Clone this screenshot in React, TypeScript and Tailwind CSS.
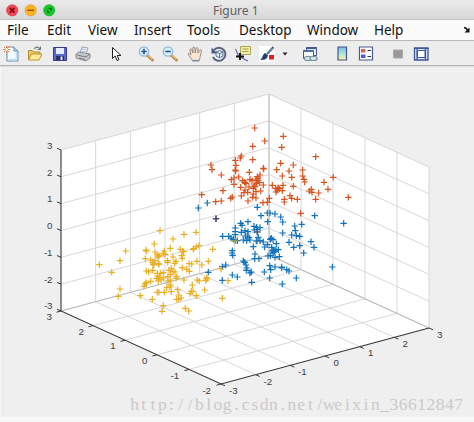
import type { ReactNode } from 'react'

type Point = [number, number]

const BLUE: Point[] = [
  [198.3, 208], [207.3, 203], [216, 218.7], [257.3, 207.3], [261, 215.7], [267.3, 213], [270, 213], [275, 214], [280.7, 217],
  [282.7, 222], [267.7, 221.7], [314.7, 215.7], [343.7, 223.3], [301.7, 224.3], [294.7, 226], [295.3, 230.7], [282.7, 233],
  [291.7, 235], [296.3, 235.7], [299.7, 236.3], [289, 242.3], [293.7, 247.3], [299.7, 245.7], [311, 241.7], [314, 247.3],
  [303.7, 253], [332.3, 267], [296.3, 278], [282.3, 284], [281.7, 267], [281.7, 268], [286.7, 269.7], [289, 271], [275, 267],
  [269.7, 265.7], [270.7, 269.7], [269.7, 278], [264.3, 272], [251.3, 272], [251.7, 282.3], [279.3, 256.7], [271.3, 238.3],
  [270.3, 239.3], [273, 239.7], [276.3, 243.7], [278.3, 249.7], [273.3, 250], [272, 251], [274.7, 251.3], [276, 250],
  [273.3, 252.7], [275, 257.3], [270.3, 255.7], [268, 256], [271.7, 247.3], [267.3, 244.7], [263.3, 242], [260, 240.7],
  [253.3, 246.7], [255, 254], [254.7, 258.7], [259, 258.7], [254, 226.3], [256.7, 227.3], [260, 227.7], [257.3, 229.3],
  [254.3, 230], [257.3, 232], [258.3, 237.3], [256.3, 241], [250, 240], [222.7, 236.3], [228.7, 236.3], [231, 238],
  [240.7, 223.3], [242, 225.3], [248, 221.7], [235.3, 231.7], [235.3, 234.7], [233.3, 239.3], [237.3, 240.7], [241.3, 232.3],
  [245, 230.7], [248, 231.7], [247.3, 236], [245.3, 236], [243.3, 240], [246.7, 240.7], [249, 237.7], [232.3, 250.7],
  [232, 253], [232.7, 255.3], [225.7, 265], [222.3, 266.7], [208.3, 272.3], [222.3, 280.3], [232.3, 275], [237.3, 277],
  [243.3, 261], [244.7, 262.3], [246, 265], [247, 268], [246.3, 270.3], [250, 273], [264.7, 247], [235.3, 228],
]

const ORANGE: Point[] = [
  [254.7, 128], [264.7, 141], [252.7, 146.3], [283.3, 136.3], [281.7, 147.3], [315.7, 156.7], [241.3, 156], [240.3, 158],
  [252.7, 159.7], [235.3, 160.3], [236, 165.3], [235.3, 170], [235.7, 171], [211, 165], [212, 169.7], [221.3, 175],
  [223, 190.7], [201.7, 194.7], [215.7, 201.7], [221.3, 201], [230.7, 198.3], [232.3, 197], [249.3, 172.3], [263.3, 168.3],
  [263.7, 169], [231.3, 179.7], [234, 178], [238.7, 177], [234, 184.3], [240.7, 187.3], [242.7, 180.7], [244.7, 182.3],
  [246, 183.3], [250, 179.3], [252, 180.7], [254, 185], [256, 180], [257.3, 176.7], [258, 180.7], [259.3, 182.7],
  [253.3, 188.3], [255, 186.7], [260, 175], [263.3, 185], [260.7, 191], [256, 191.7], [247.7, 192.3], [244, 192.7],
  [241.3, 196], [248, 201], [253.3, 194], [252.7, 197.3], [256, 198], [269.3, 198.3], [263, 202.7], [267.3, 202.3],
  [245, 190], [249, 187], [256.7, 183.3], [258, 178.7], [280.7, 163.3], [276.7, 169.7], [293.3, 165], [289, 171],
  [302.7, 170], [282.3, 176], [291.7, 177.3], [302.7, 176], [304, 179.3], [304.7, 182], [333.3, 177.3], [324, 182.3],
  [328, 189.3], [318.7, 193], [315.7, 199.3], [311.3, 189.3], [309.3, 191], [312, 192.3], [348.3, 197.3], [300.7, 213.3],
  [297.3, 199.3], [290, 195.7], [291.7, 198.3], [284.3, 199.3], [284.3, 202], [293.3, 186.3], [283, 185.3], [272.3, 185.3],
  [275.7, 188.3], [277.3, 190], [279.3, 188.7], [282.3, 190.7], [276, 192], [278, 187.7],
]

const YELLOW: Point[] = [
  [99.3, 264.7], [111.7, 272.3], [120, 260.7], [125.7, 251], [120, 289], [118.3, 296.3], [140.3, 295.7], [144, 286.3],
  [145, 284], [146.3, 282.7], [150.7, 281.3], [160, 230.7], [154.3, 244], [173, 239], [184, 234.3], [196, 232.3],
  [146, 250], [146.3, 251], [145.3, 258.7], [146.3, 271], [148.7, 272], [150.7, 260], [152.7, 262.3], [153.7, 265],
  [155, 252], [157, 254.7], [159, 255.7], [158, 256.7], [164.3, 251], [163.3, 253.3], [165, 254.3], [170.3, 248.3],
  [180.3, 249.3], [182.7, 251.3], [183.7, 251.7], [181.7, 255.7], [182.3, 258.3], [199, 245.5], [196.3, 246.7],
  [193.7, 248.7], [193.3, 249.3], [212.7, 249.3], [155, 260.7], [158.3, 263.7], [153, 264], [159, 264.3], [167.3, 260.7],
  [167.7, 262.3], [176, 261.3], [174.7, 263.3], [189.3, 263.7], [191.7, 264], [197, 261.3], [201.7, 265], [208.3, 261.3],
  [152.7, 270.3], [171.3, 268.3], [169, 270.3], [173, 271.7], [175, 272], [170.7, 274.7], [186.7, 269.3], [189.3, 271.3],
  [182.3, 267.7], [157.3, 273.3], [160.3, 273.3], [163.3, 272.7], [157.3, 276], [159.3, 277.3], [156.7, 278.3], [161, 279.7],
  [158.3, 281], [163.3, 278], [167.7, 276.7], [170, 280], [168, 281], [176.7, 276.7], [176, 278.3], [184, 280],
  [197.3, 280], [199.3, 281], [206.7, 277.7], [205.7, 280.3], [207, 279], [204.7, 290], [192.3, 285], [191.3, 291.3],
  [190, 293.5], [193, 291.5], [196.3, 295.7], [170.7, 285], [169.7, 287], [166.7, 287.7], [164.3, 292.3], [157.3, 292.3],
  [159, 292.3], [171.3, 291.7], [177.7, 289.7], [178.7, 295], [176.7, 299.3], [178.7, 299.3], [181, 298], [152.3, 299.3],
  [163.3, 305.7], [162, 311.3], [185.3, 308.3], [188.7, 311], [222.3, 298.3], [221, 269], [228, 280.7], [173, 257],
]

// Markers where two series sit on top of each other
const OVERLAP: { at: Point; color: string }[] = [
  { at: [216, 218.7], color: '#5f3b62' },
  { at: [257.3, 232], color: '#5f5560' },
  { at: [235.3, 240.7], color: '#8d9540' },
  { at: [257, 241], color: '#2f72a8' },
]

const TITLES = [
  { label: 'File', className: 'ml-[7px] w-[40px]' },
  { label: 'Edit', className: 'w-[41px]' },
  { label: 'View', className: 'w-[46px]' },
  { label: 'Insert', className: 'w-[53px]' },
  { label: 'Tools', className: 'w-[52px]' },
  { label: 'Desktop', className: 'w-[68px]' },
  { label: 'Window', className: 'w-[67px]' },
  { label: 'Help', className: 'w-[40px]' },
]

// Axes box corners
const LEFT = { x: 61, top: 150, bottom: 311 }
const BACK = { x: 269, top: 94, bottom: 255 }
const RIGHT = { x: 429, top: 167, bottom: 328 }

const plusPath = (points: Point[]) => points.map(([x, y]) => `M${x - 3.2} ${y}h6.4M${x} ${y - 3.2}v6.4`).join('')

function gridPath() {
  const parts: string[] = []
  const dx = (BACK.x - LEFT.x) / 6
  const dy = (BACK.top - LEFT.top) / 6
  const rx = (RIGHT.x - BACK.x) / 5
  const ry = (RIGHT.top - BACK.top) / 5
  for (let i = 0; i <= 6; i++) {
    const x = LEFT.x + dx * i
    const y = LEFT.bottom + dy * i
    const z = (161 / 6) * i
    if (i > 0) parts.push(`M${x} ${LEFT.top + dy * i}V${y}l160 73`)
    parts.push(`M${LEFT.x} ${LEFT.top + z}L${BACK.x} ${BACK.top + z}L${RIGHT.x} ${RIGHT.top + z}`)
  }
  for (let i = 1; i <= 5; i++) {
    const x = BACK.x + rx * i
    parts.push(`M${x} ${BACK.top + ry * i}V${BACK.bottom + ry * i}`)
    if (i < 5) parts.push(`M${x} ${BACK.bottom + ry * i}l-208 56`)
  }
  return parts.join('')
}

function tickPath() {
  const parts: string[] = []
  for (let i = 0; i <= 6; i++) {
    parts.push(`M61 ${150 + (161 / 6) * i}l-4 -1.8`)
    parts.push(`M${221 + (208 / 6) * i} ${384 - (56 / 6) * i}l4 1.8`)
  }
  for (let i = 0; i <= 5; i++) {
    parts.push(`M${61 + 32 * i} ${311 + 14.6 * i}l-4.5 1.2`)
  }
  return parts.join('')
}

const WATERMARK = 'http://blog.csdn.net/weixin_36612847'
const WATERMARK_X = WATERMARK.split('').map((_, i) => (134.5 + i * 9.26).toFixed(1)).join(' ')

function Plot() {
  return (
    <svg width="474" height="355" viewBox="0 67 474 355" className="block shrink-0">
      <path d="M61 150L269 94L429 167V328L221 384L61 311Z" fill="#fff" />
      <path d={gridPath()} fill="none" stroke="#d3d3d3" strokeWidth="0.9" />
      <path d="M61 311L269 255L429 328M269 94V255" fill="none" stroke="#b8b8b8" strokeWidth="0.9" />
      <g fill="none" strokeWidth="1.2">
        <path d={plusPath(BLUE)} stroke="#0f72bd" />
        <path d={plusPath(ORANGE)} stroke="#d9531f" />
        <path d={plusPath(YELLOW)} stroke="#e9af20" />
        {OVERLAP.map(({ at, color }) => (
          <path key={at.join()} d={plusPath([at])} stroke={color} />
        ))}
      </g>
      <path d="M61 150V311L221 384L429 328" fill="none" stroke="#333" strokeWidth="1.1" />
      <path d={tickPath()} stroke="#333" strokeWidth="1" />
      <g fontFamily='"Liberation Sans", sans-serif' fontSize="9.7" fill="#3c3c3c">
        <g textAnchor="end">
          {[3, 2, 1, 0, -1, -2, -3].map((n, i) => (
            <text key={n} x="52.5" y={149 + 26.7 * i}>{n}</text>
          ))}
          {[3, 2, 1, 0, -1, -2].map((n, i) => (
            <text key={n} x={52 + 31.8 * i} y={319.7 + 14.8 * i}>{n}</text>
          ))}
        </g>
        {[-3, -2, -1, 0, 1, 2, 3].map((n, i) => (
          <text key={n} x={(n < 0 ? 229 : 230) + 34.5 * i} y={394 - 9.4 * i}>{n}</text>
        ))}
      </g>
      <text x={WATERMARK_X} y="410" textAnchor="middle" fontFamily='"Liberation Serif", serif' fontSize="17.5" fill="#cacaca">
        {WATERMARK}
      </text>
      <path d="M0 67H1V417H474V422H0Z" fill="#f7f7f7" />
    </svg>
  )
}

function Icon({ className, children }: { className: string; children: ReactNode }) {
  return (
    <svg width="18" height="18" viewBox="0 0 18 18" fill="none" className={`shrink-0 ${className}`}>
      {children}
    </svg>
  )
}

function Magnifier({ plus }: { plus?: boolean }) {
  return (
    <>
      <path d="M10.5 10.5l5 4.5" stroke="#b98545" strokeWidth="3" strokeLinecap="round" />
      <path d="M11 10.3l4.5 4" stroke="#f0c987" strokeWidth="1.2" />
      <circle cx="7" cy="6.5" r="4.7" fill="#d6f1fb" stroke="#8eb7d6" strokeWidth="1.2" />
      <path d={plus ? 'M4.3 6.5h5.4M7 3.8v5.4' : 'M4.3 6.5h5.4'} stroke="#29518e" strokeWidth="1.6" />
    </>
  )
}

function Toolbar() {
  return (
    <div className="flex h-[24px] shrink-0 items-center bg-[#ededed] pt-px">
      <Icon className="ml-[2px]">
        <path d="M5 2h7l4 4v10H5z" fill="#f5fbff" stroke="#6688ae" />
        <path d="M12 2v4h4" fill="#b8d4ee" stroke="#6688ae" />
        <path d="M14.5 7v7.5H7" stroke="#c3e0f2" strokeWidth="1.5" />
        <path d="M2 2l5 5M7 2L2 7M4.5 1v7M1 4.5h7" stroke="#d98255" strokeWidth="1" />
        <circle cx="4.5" cy="4.5" r="1.4" fill="#fff2cb" />
      </Icon>
      <Icon className="ml-[6px]">
        <path d="M2.5 15V5.5h4L8 7h6v3" fill="#e9c85f" stroke="#ad8b32" />
        <path d="M2.5 15l3-6H16l-3 6z" fill="#ffe99a" stroke="#bd962f" />
        <path d="M8 4c2-3 5-2 6 0M14.5 1.5v3h-3" stroke="#697b83" strokeWidth="1.1" />
      </Icon>
      <Icon className="ml-[7px]">
        <path d="M2.5 2.5h13v13h-13z" fill="#5867c9" stroke="#353b91" />
        <path d="M5 3h8v6H5z" fill="#e6edff" />
        <path d="M5 11h8v4H5z" fill="#28306f" />
        <path d="M9.5 11.5h2V15h-2z" fill="#e4e6f6" />
      </Icon>
      <Icon className="ml-[5px]">
        <path d="M6 8l2-6 6 1-2 6z" fill="#eff5ff" stroke="#96a5be" />
        <path d="M2 9l3-2 11 2v4l-4 3-10-3z" fill="#c6c8cd" stroke="#898c93" />
        <path d="M3 10l9 2 4-3M5 13l6 1.5" stroke="#777b84" />
        <path d="M8 4l4 .7M7.5 6l4 .7" stroke="#9cabce" strokeWidth=".7" />
      </Icon>
      <Icon className="ml-[15px]">
        <path d="M5.5 2.5v11l2.7-2.5L10 15.5l2-.8-1.8-4.2H14z" fill="#fff" stroke="#222" strokeWidth="1" />
      </Icon>
      <Icon className="ml-[12px]"><Magnifier plus /></Icon>
      <Icon className="ml-[6px]"><Magnifier /></Icon>
      <Icon className="ml-[7px]">
        <path d="M6 15c-1-2-3-4-4-6 .5-1.300 2-.5 3 1L3.800 5c0-1.500 1.600-1.500 2 0L7 8l-.2-5c.2-1.500 1.800-1.500 2 0L9.200 8l1-4.600c.4-1.400 2-1 1.800.4L11.800 8l2-2.800c.8-1.200 2-.5 1.600.8C14.500 10 14 13 13 16H7z" fill="#fde5d2" stroke="#8f8279" strokeWidth=".9" />
        <path d="M6 15.5h7" stroke="#8190b6" strokeWidth="1.4" />
      </Icon>
      <Icon className="ml-[6px]">
        <path d="M4 5a6.500 6.500 0 1 1-1 7" stroke="#536580" strokeWidth="2" />
        <path d="M1.500 2.500v6h6z" fill="#455d83" />
        <path d="M6 7l3.500-1.500L13 7v4l-3.500 1.700L6 11zM6 7l3.500 1.500L13 7M9.500 8.500v4" fill="#dbeaf7" stroke="#50688b" strokeWidth=".9" />
      </Icon>
      <Icon className="ml-[6px]">
        <path d="M1 4c2 0 2 7 5 8s5 3 8 4" stroke="#555fc0" strokeWidth="1.1" />
        <path d="M6.500 1.500h10v8h-10z" fill="#f1efa3" stroke="#aaa854" />
        <path d="M8.500 4h6M8.500 6.500h6" stroke="#99964e" strokeWidth=".9" />
        <path d="M2 11.500h8M6 8v7" stroke="#151515" strokeWidth="1.9" />
      </Icon>
      <Icon className="ml-[6px]">
        <rect x="1" y="1" width="16" height="16" rx="1" fill="#fff" />
        <path d="M9 9l6.500-7" stroke="#485e83" strokeWidth="2.3" />
        <path d="M9.500 8l5-5" stroke="#9cb9d6" strokeWidth=".8" />
        <path d="M7 8l3 2.500c-1 4-4 4.500-8 4.500 3-2 2-5 5-7z" fill="#263d65" />
        <path d="M11 10h5v4.500h-5z" fill="#ed1820" />
      </Icon>
      <svg width="8" height="18" viewBox="0 0 8 18" className="ml-[5px] shrink-0">
        <path d="M1.500 7.500h5L4 10.500z" fill="#222" />
      </svg>
      <Icon className="ml-[12px]">
        <path d="M5.500 2.500h10v8h-10z" fill="#e8f0fb" stroke="#425b91" />
        <path d="M5 3.200h11" stroke="#425b91" strokeWidth="1.7" />
        <path d="M2.500 5.500h10v8h-10z" fill="#f5f8fd" stroke="#425b91" />
        <path d="M2 6.200h11" stroke="#506da5" strokeWidth="1.5" />
        <rect x="3.5" y="11.5" width="7" height="4" rx="2" fill="#d7e3e9" stroke="#748e9c" strokeWidth="1.2" />
        <rect x="9" y="11.5" width="7" height="4" rx="2" fill="#d7e3e9" stroke="#748e9c" strokeWidth="1.2" />
      </Icon>
      <Icon className="ml-[14px]">
        <defs>
          <linearGradient id="colorbar" x1="0" y1="0" x2="0" y2="1">
            <stop stopColor="#79b6e5" />
            <stop offset=".5" stopColor="#a9e5e0" />
            <stop offset="1" stopColor="#fff09b" />
          </linearGradient>
        </defs>
        <path d="M5 2h8.500v13H5z" fill="url(#colorbar)" stroke="#45558b" strokeWidth="1.2" />
      </Icon>
      <Icon className="ml-[6px]">
        <path d="M2.500 2h13v13h-13z" fill="#fff" stroke="#4b5a93" strokeWidth="1.2" />
        <path d="M4 4h4.500v3.500H4z" fill="#cf6960" />
        <path d="M4 9.500h4.500V13H4z" fill="#535bd9" />
        <path d="M10.500 5.500H14M10.500 11.500H14" stroke="#333" strokeWidth="1.2" />
      </Icon>
      <Icon className="ml-[14px]">
        <path d="M4.500 5h9v8h-9z" fill="#999" stroke="#aaa" />
      </Icon>
      <Icon className="ml-[5px]">
        <path d="M2.500 3h13.500v12H2.500z" fill="#dce6f3" stroke="#3c5795" strokeWidth="1.3" />
        <path d="M2 3.500h14.500M5 3v12M13.500 3v12" stroke="#3c5795" strokeWidth="1.2" />
        <path d="M5.500 5.500h7.500v7H5.500z" fill="#fff" stroke="#3c5795" />
      </Icon>
    </div>
  )
}

function TitleBar() {
  return (
    <div className="flex h-[20px] shrink-0 items-center border-b border-[#c3c3c3] bg-linear-to-b from-[#ebebeb] to-[#d7d7d7] pl-[6px]">
      <svg width="50" height="13" viewBox="0 0 50 13" className="mt-px shrink-0">
        <circle cx="6.2" cy="6.3" r="5.6" fill="#f44552" stroke="#dc3b46" strokeWidth=".7" />
        <path d="M3.8 3.9l4.800 4.800M8.600 3.900L3.800 8.700" stroke="#76040c" strokeWidth="1.5" />
        <circle cx="24.7" cy="6.3" r="5.6" fill="#fdb324" stroke="#e39b21" strokeWidth=".7" />
        <path d="M21.300 6.300h6.800" stroke="#955700" strokeWidth="1.5" />
        <circle cx="43.2" cy="6.3" r="5.6" fill="#13c92c" stroke="#14ad26" strokeWidth=".7" />
        <path d="M40.800 5.200v3.600h3.600zM42.200 3.700h3.500v3.500z" fill="#06640c" />
      </svg>
      <span className="ml-[157px] mt-px whitespace-nowrap font-['Noto_Sans',sans-serif] text-[12px] leading-[17px] text-[#606060]">Figure 1</span>
    </div>
  )
}

export default function App() {
  return (
    <div className="flex h-[422px] w-[474px] flex-col overflow-hidden bg-[#efefef]">
      <TitleBar />
      <div className="flex h-[21px] shrink-0 items-center border-b border-[#b9b9b9] bg-[#fbfbfb] font-['Noto_Sans',sans-serif] text-[13.5px] leading-[20px] text-[#111]">
        {TITLES.map(({ label, className }) => (
          <span key={label} className={`shrink-0 whitespace-nowrap ${className}`}>{label}</span>
        ))}
        <svg width="8" height="8" viewBox="0 0 8 8" className="ml-auto mr-[3px]">
          <path d="M1 1.500c2 0 3 1.500 4 3" stroke="#111" strokeWidth="1.5" fill="none" />
          <path d="M6.500 1.500v5h-5z" fill="#111" />
        </svg>
      </div>
      <Toolbar />
      <div className="h-[2px] shrink-0 border-t border-[#b5b5b5] bg-[#dedede]" />
      <Plot />
    </div>
  )
}
